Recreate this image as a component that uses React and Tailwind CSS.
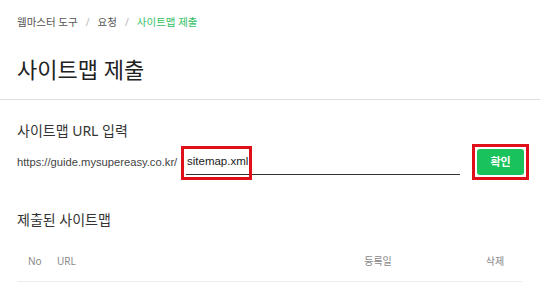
import React from 'react';

const font = { fontFamily: '"Noto Sans", "Noto Sans CJK KR", sans-serif' };
const latin = { fontFamily: '"Liberation Sans", "Noto Sans CJK KR", sans-serif' };

const Breadcrumb = () => (
  <nav className="flex items-center text-[10.5px] leading-[16px] text-[#555]">
    <span>웹마스터 도구</span>
    <span className="mx-[8px] text-[#bbb]">/</span>
    <span>요청</span>
    <span className="mx-[8px] text-[#bbb]">/</span>
    <span className="text-[#2fbf62]">사이트맵 제출</span>
  </nav>
);

const App = () => {
  return (
    <div className="w-[540px] h-[284px] overflow-hidden bg-white" style={font}>
      <div className="px-[17px] pt-[14px]">
        <Breadcrumb />
        <h1 className="mt-[23px] text-[22px] leading-[32px] font-normal text-[#222]">사이트맵 제출</h1>
      </div>

      <div className="mt-[14px] border-t border-[#dedede]" />

      <div className="px-[17px]">
        <h2 className="mt-[20px] text-[14px] leading-[22px] text-[#333]">사이트맵 URL 입력</h2>

        <div className="mt-[1px] h-[38px] flex items-center" style={latin}>
          <span className="shrink-0 text-[11.2px] text-[#444] w-[164px] whitespace-nowrap">https://guide.mysupereasy.co.kr/</span>
          <div className="relative shrink-0 ml-[5px] w-[274px] h-[26px] border-b-[1.5px] border-[#333] flex items-center">
            <span className="pl-[1px] text-[11.5px] text-[#222] whitespace-nowrap">sitemap.xml</span>
            <div className="absolute left-[-5px] top-[-3px] w-[71px] h-[34px] border-[3px] border-[#e0101a]" />
          </div>
          <div className="shrink-0 ml-[12px] border-[3px] border-[#e0101a] p-[2px]">
            <button className="w-[47px] h-[26px] rounded-[3px] bg-[#19c25a] text-white text-[11px] font-bold flex items-center justify-center" style={font}>
              확인
            </button>
          </div>
        </div>

        <h2 className="mt-[28px] text-[14px] leading-[22px] text-[#333]">제출된 사이트맵</h2>

        <div className="mt-[23px] w-[505px] flex items-center pb-[13px] border-b border-[#ececec] text-[10px] leading-[14px] text-[#888]">
          <span className="ml-[11px] w-[29px]">No</span>
          <span className="flex-1">URL</span>
          <span className="w-[34px] text-center">등록일</span>
          <span className="ml-[88px] w-[24px] mr-[15px] text-center">삭제</span>
        </div>
      </div>
    </div>
  );
};

export default App;
